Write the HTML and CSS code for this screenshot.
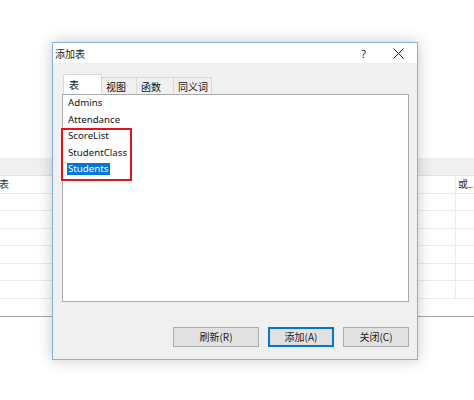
FILE: index.html
```html
<!DOCTYPE html>
<html lang="zh">
<head>
<meta charset="utf-8">
<title>添加表</title>
<link rel="stylesheet" href="styles.css">
</head>
<body>
<div class="page">
  <div class="grid">
    <div class="grid-band"></div>
    <div class="grid-row"><span class="cell-left">表</span><span class="cell-right">或<span class="dots">...</span></span></div>
    <div class="grid-row"><span class="cell-left"></span><span class="cell-right"></span></div>
    <div class="grid-row"><span class="cell-left"></span><span class="cell-right"></span></div>
    <div class="grid-row"><span class="cell-left"></span><span class="cell-right"></span></div>
    <div class="grid-row"><span class="cell-left"></span><span class="cell-right"></span></div>
    <div class="grid-row"><span class="cell-left"></span><span class="cell-right"></span></div>
    <div class="grid-row"><span class="cell-left"></span><span class="cell-right"></span></div>
    <div class="grid-gap"></div>
  </div>

  <div class="dialog">
    <div class="titlebar">
      <span class="title">添加表</span>
      <span class="help">?</span>
      <span class="close">
        <svg width="11" height="11" viewBox="0 0 11 11"><path d="M0.5 0.5 L10.5 10.5 M10.5 0.5 L0.5 10.5" stroke="#222" stroke-width="1" fill="none"/></svg>
      </span>
    </div>
    <div class="body">
      <div class="tabs">
        <div class="tab active">表</div>
        <div class="tab t2">视图</div>
        <div class="tab t3">函数</div>
        <div class="tab t4">同义词</div>
      </div>
      <div class="listbox">
        <div class="item">Admins</div>
        <div class="item">Attendance</div>
        <div class="item">ScoreList</div>
        <div class="item">StudentClass</div>
        <div class="item"><span class="selected">Students</span></div>
        <div class="mark"></div>
      </div>
      <div class="buttons">
        <div class="btn wide">刷新(R)</div>
        <div class="btn default">添加(A)</div>
        <div class="btn">关闭(C)</div>
      </div>
    </div>
  </div>
</div>
</body>
</html>
```
FILE: styles.css
```css
html, body {
  margin: 0;
  padding: 0;
  background: #fff;
}
body {
  font-family: "Noto Sans", "Noto Sans CJK SC", sans-serif;
  font-size: 10px;
  color: #000;
}
.page {
  position: relative;
  width: 474px;
  height: 400px;
  overflow: hidden;
}
.grid {
  padding-top: 158px;
}
.grid-band {
  height: 17px;
  background: #f0f0f0;
  border-bottom: 1px solid #e2e2e2;
}
.grid-row {
  height: 16.5px;
  border-bottom: 1px solid #ececec;
  display: flex;
  justify-content: space-between;
}
.cell-left {
  width: 60px;
  font-family: "Noto Sans CJK SC", sans-serif;
  font-size: 10px;
  line-height: 16px;
  color: #333;
  margin-left: -1px;
}
.cell-right {
  width: 16px;
  border-left: 1px solid #ececec;
  font-family: "Noto Sans CJK SC", sans-serif;
  font-size: 10px;
  line-height: 16px;
  color: #333;
  padding-left: 2px;
  white-space: nowrap;
}
.dots {
  font-family: "Noto Sans", sans-serif;
  font-size: 8px;
  letter-spacing: -0.6px;
}
.grid-gap {
  height: 17px;
  border-bottom: 1px solid #a8a8a8;
}

.dialog {
  position: absolute;
  left: 52px;
  top: 42px;
  width: 364px;
  height: 316px;
  border: 1px solid #86b1dd;
  background: #f0f0f0;
  box-shadow: 0 0 14px rgba(0, 0, 0, 0.22);
  display: flex;
  flex-direction: column;
}
.titlebar {
  height: 20px;
  background: #fff;
  display: flex;
  align-items: center;
  font-family: "Noto Sans CJK SC", sans-serif;
  font-size: 10px;
  color: #222;
}
.title {
  padding-left: 2px;
  flex: 1;
}
.help {
  font-family: "Noto Sans", sans-serif;
  font-size: 11px;
  margin-right: 27px;
}
.close {
  display: flex;
  margin-right: 13px;
}
.body {
  flex: 1;
  padding: 11px 8px 0 9px;
  display: flex;
  flex-direction: column;
}
.tabs {
  display: flex;
  align-items: flex-end;
  height: 20px;
  padding-left: 1px;
  font-family: "Noto Sans CJK SC", sans-serif;
  font-size: 10px;
}
.tab {
  height: 17px;
  line-height: 17px;
  border: 1px solid #d9d9d9;
  border-bottom: none;
  background: #f0f0f0;
  padding-left: 4px;
  box-sizing: border-box;
  color: #111;
}
.tab + .tab {
  border-left: none;
}
.tab.active {
  height: 20px;
  line-height: 20px;
  width: 39px;
  background: #fff;
  padding-left: 5px;
}
.tab.t2 { width: 35px; }
.tab.t3 { width: 37px; }
.tab.t4 { width: 38px; }
.listbox {
  position: relative;
  height: 208px;
  background: #fff;
  border: 1px solid #a9a9a9;
  padding: 0 0 0 4px;
  box-sizing: border-box;
}
.item {
  height: 16.6px;
  line-height: 16.6px;
  font-size: 9.7px;
  color: #111;
  padding-left: 1px;
}
.selected {
  display: inline-block;
  background: #0078d7;
  color: #fff;
  line-height: 12px;
  padding: 0 2px 0 1px;
  margin-left: -1px;
}
.mark {
  position: absolute;
  left: -2px;
  top: 33px;
  width: 67px;
  height: 49px;
  border: 2px solid #e3131c;
}
.buttons {
  display: flex;
  justify-content: flex-end;
  gap: 9px;
  margin-top: 25px;
  font-family: "Noto Sans CJK SC", sans-serif;
  font-size: 10px;
}
.btn {
  width: 66px;
  height: 20px;
  line-height: 18px;
  box-sizing: border-box;
  border: 1px solid #adadad;
  background: #e1e1e1;
  text-align: center;
  color: #222;
}
.btn.wide {
  width: 86px;
}
.btn.default {
  border: 2px solid #0078d7;
  line-height: 16px;
}
```
